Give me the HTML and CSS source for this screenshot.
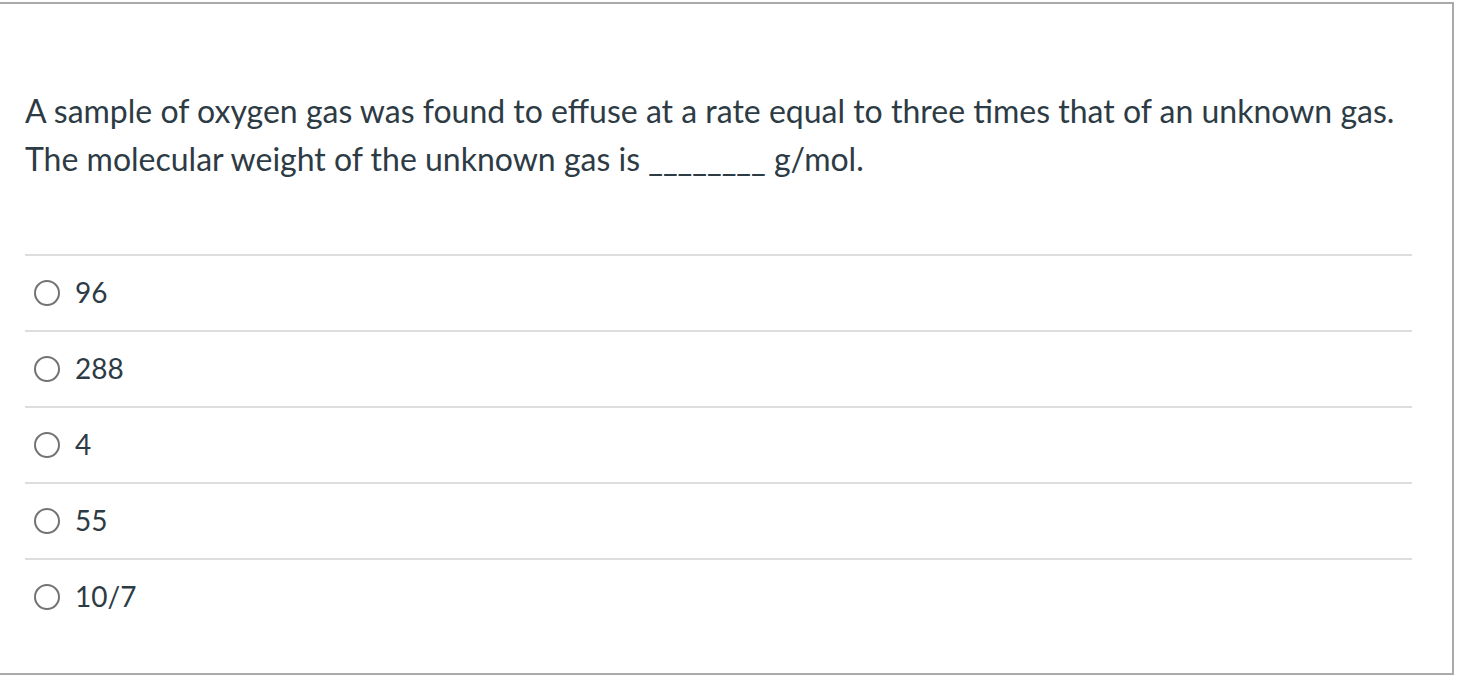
FILE: index.html
```html
<!DOCTYPE html>
<html>
<head>
<meta charset="utf-8">
<link rel="stylesheet" href="styles.css">
</head>
<body>
<div class="panel">
  <div class="question">A sample of oxygen gas was found to effuse at a rate equal to three times that of an unknown gas. The molecular weight of the unknown gas is ________ g/mol.</div>
  <div class="answers">
    <label class="answer"><span class="radio"></span><span class="label">96</span></label>
    <label class="answer"><span class="radio"></span><span class="label">288</span></label>
    <label class="answer"><span class="radio"></span><span class="label">4</span></label>
    <label class="answer"><span class="radio"></span><span class="label">55</span></label>
    <label class="answer"><span class="radio"></span><span class="label">10/7</span></label>
  </div>
</div>
</body>
</html>
```
FILE: styles.css
```css
html, body {
  margin: 0;
  padding: 0;
  background: #fff;
}
body {
  padding-top: 2px;
  font-family: Lato, "Open Sans", sans-serif;
  color: #2d3b45;
}
.panel {
  width: 1455px;
  height: 673px;
  box-sizing: border-box;
  margin-left: -1px;
  border: 2px solid #aaaaaa;
  border-left: none;
  padding: 83px 40px 0 26px;
}
.question {
  font-size: 32px;
  line-height: 48px;
  max-width: 1388px;
}
.answers {
  margin-top: 71px;
  display: flex;
  flex-direction: column;
}
.answer {
  display: flex;
  align-items: center;
  height: 76px;
  box-sizing: border-box;
  border-top: 2px solid #dddddd;
  padding-left: 9px;
  padding-bottom: 3px;
  font-size: 28px;
}
.radio {
  width: 26px;
  height: 26px;
  box-sizing: border-box;
  border: 2px solid #737373;
  border-radius: 50%;
  flex: none;
  margin-top: 3px;
}
.label {
  margin-left: 15px;
}
```
